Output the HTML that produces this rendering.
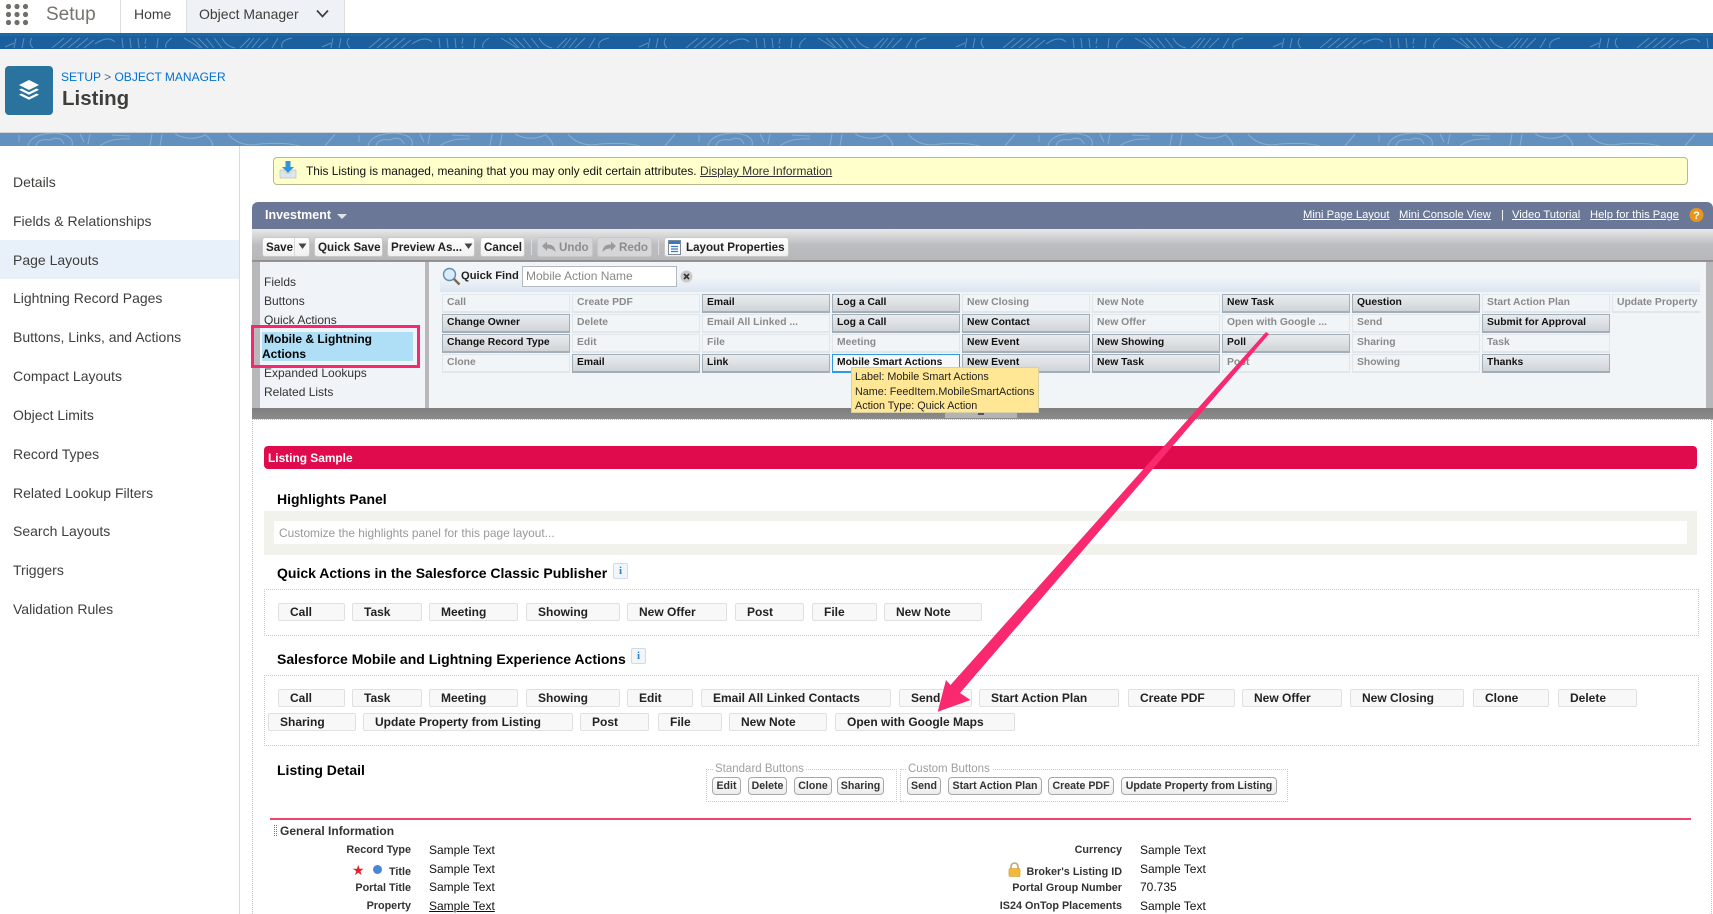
<!DOCTYPE html>
<html><head><meta charset="utf-8"><title>Listing</title>
<style>
*{box-sizing:border-box}
html,body{margin:0;padding:0;width:1713px;height:914px;overflow:hidden;background:#fff;font-family:"Liberation Sans",Arial,sans-serif}
.p{position:absolute;white-space:nowrap}
.s{position:absolute;left:13px;font-size:14px;color:#3e3e3c;height:20px;line-height:20px}
.t{position:absolute;top:237px;height:20px;line-height:19px;background:linear-gradient(#fff,#f0f0f0);border:1px solid #c8c8c8;border-radius:3px;font-size:11.6px;font-weight:bold;color:#222;padding-left:3px;white-space:nowrap}
.l{position:absolute;left:264px;font-size:12px;color:#333;line-height:16px;height:16px}
.c{position:absolute;width:128px;height:19px;line-height:15px;font-size:10.35px;font-weight:bold;padding-left:4px;white-space:nowrap;overflow:hidden}
.a{background:linear-gradient(#e9ecef,#d0d4d8);border:1px solid #a2aeb8;border-width:1px 1px 2px 1px;color:#111}
.i{background:#f2f5f8;border:1px solid #e1e6eb;border-width:1px 1px 2px 1px;color:#8a8a8a}
.b{position:absolute;height:18px;line-height:16px;background:#f8f8f8;border:1px solid #e0e0e0;border-radius:2px;font-size:12px;font-weight:bold;color:#222;padding-left:11px;white-space:nowrap}
.h{position:absolute;left:277px;font-size:14px;font-weight:bold;color:#000;height:18px;line-height:18px;white-space:nowrap}
.d{position:absolute;height:18px;top:777px;line-height:16px;background:linear-gradient(#fff,#ececec);border:1px solid #a8a8a8;border-radius:4px;font-size:10.6px;font-weight:bold;color:#333;text-align:center;white-space:nowrap}
.f{position:absolute;border:1px dotted #c8c8c8}
.g{position:absolute;font-size:11.5px;color:#a0a0a0;background:#fff;padding:0 2px;line-height:13px;white-space:nowrap}
.k{position:absolute;font-size:10.8px;font-weight:bold;color:#333;text-align:right;line-height:14px;white-space:nowrap}
.v{position:absolute;font-size:12px;color:#111;line-height:14px;white-space:nowrap}
.n{position:absolute;width:15px;height:16px;border:1px solid #cfdbe8;border-radius:2px;background:#f2f6fb;color:#2b7fd4;font:bold 11px "Liberation Serif",serif;text-align:center;line-height:14px}
.m{position:absolute;top:207px;font-size:11.2px;line-height:16px;color:#fff;white-space:nowrap}
a{color:inherit}
</style></head><body>

<!-- top nav -->
<svg class="p" style="left:0;top:0" width="40" height="33"><g fill="#706e6b"><circle cx="8.5" cy="6.5" r="2.6"/><circle cx="17" cy="6.5" r="2.6"/><circle cx="25.5" cy="6.5" r="2.6"/><circle cx="8.5" cy="14.5" r="2.6"/><circle cx="17" cy="14.5" r="2.6"/><circle cx="25.5" cy="14.5" r="2.6"/><circle cx="8.5" cy="22.5" r="2.6"/><circle cx="17" cy="22.5" r="2.6"/><circle cx="25.5" cy="22.5" r="2.6"/></g></svg>
<div class="p" style="left:46px;top:3px;font-size:19px;line-height:24px;color:#77746f">Setup</div>
<div class="p" style="left:120px;top:0;width:1px;height:33px;background:#dcdcdc"></div>
<div class="p" style="left:134px;top:5px;font-size:14px;line-height:18px;color:#3e3e3c">Home</div>
<div class="p" style="left:186px;top:0;width:159px;height:33px;background:#eef1f6;border-left:1px solid #dcdcdc;border-right:1px solid #dcdcdc"></div>
<div class="p" style="left:199px;top:5px;font-size:14px;line-height:18px;color:#3e3e3c">Object Manager</div>
<svg class="p" style="left:315px;top:8px" width="15" height="12"><path d="M2 2.5 L7.5 8.5 L13 2.5" fill="none" stroke="#3e3e3c" stroke-width="1.7"/></svg>

<!-- blue band -->
<svg class="p" style="left:0;top:33px" width="1713" height="16">
<defs><pattern id="pa" width="317" height="13" patternUnits="userSpaceOnUse" y="3">
<g fill="none" stroke="#5a8fbd" stroke-width="1">
<path d="M5 11 L14 7 M16 2 L14 12 M24 2 L22 12 M32 2 Q28 7 33 12 M52 12 L64 2 M60 12 L72 2 M68 12 L80 2 M76 12 L88 2 M84 12 L94 4 M95 8 Q108 -1 115 6 M122 2 L123 12 M130 2 L131 12 M138 2 L139 12 M146 2 L145 8 M146 10 L145 12 M158 2 L157 12 M172 2 Q164 7 166 12 M184 2 Q194 8 200 12 M192 2 L202 12 M198 2 L208 12 M206 2 L214 12 M214 2 L222 12 M222 2 Q226 10 235 12 M240 12 L250 2 M246 12 L254 2 M252 12 L260 2 M258 12 L268 2 M272 12 L278 2 M282 12 Q280 4 292 2"/>
</g></pattern></defs>
<rect width="1713" height="16" fill="#1b5f9e"/><rect width="1713" height="3" fill="#1b6aa6"/><rect y="3" width="1713" height="13" fill="url(#pa)"/></svg>

<!-- header -->
<div class="p" style="left:0;top:49px;width:1713px;height:83px;background:#f3f3f3"></div>
<div class="p" style="left:5px;top:66px;width:48px;height:49px;background:#2a739e;border-radius:4px"></div>
<svg class="p" style="left:17px;top:78px" width="24" height="24"><path d="M12 2 L22 7 L12 12 L2 7 Z" fill="#fff"/><path d="M4.5 10.5 L12 14.2 L19.5 10.5 L22 11.8 L12 16.8 L2 11.8 Z" fill="#fff"/><path d="M4.5 15.5 L12 19.2 L19.5 15.5 L22 16.8 L12 21.8 L2 16.8 Z" fill="#fff"/></svg>
<div class="p" style="left:61px;top:69px;font-size:12px;line-height:16px;color:#0070d2">SETUP <span style="color:#54698d">&gt;</span> OBJECT MANAGER</div>
<div class="p" style="left:62px;top:85px;font-size:20.5px;font-weight:bold;line-height:28px;color:#3e3e3c">Listing</div>

<!-- lower band -->
<svg class="p" style="left:0;top:132px" width="1713" height="14">
<defs><pattern id="pb" width="340" height="14" patternUnits="userSpaceOnUse">
<g fill="none" stroke="#89add0" stroke-width="1">
<path d="M19 3 L19 10 M28 14 Q30 2 55 1 Q75 3 72 14 M36 14 Q38 6 50 8 Q60 3 64 12 M80 2 L84 10 M90 2 L88 12 M100 14 Q110 6 130 7 M112 3 L130 4 M150 14 L152 2 M160 14 L162 2 M175 2 Q190 10 205 3 M205 2 Q215 12 212 14 M228 2 Q240 16 260 12 Q285 10 300 14 M325 14 L335 2"/>
</g></pattern></defs>
<rect width="1713" height="14" fill="#6391bf"/><rect width="1713" height="1" fill="#d0d4d8"/><rect y="1" width="1713" height="13" fill="url(#pb)"/></svg>

<!-- sidebar -->
<div class="p" style="left:239px;top:146px;width:1px;height:768px;background:#dddbda"></div>
<div class="p" style="left:0;top:240px;width:239px;height:39px;background:#e8f0f9"></div>
<div class="s" style="top:172px">Details</div>
<div class="s" style="top:211px">Fields &amp; Relationships</div>
<div class="s" style="top:250px">Page Layouts</div>
<div class="s" style="top:288px">Lightning Record Pages</div>
<div class="s" style="top:327px">Buttons, Links, and Actions</div>
<div class="s" style="top:366px">Compact Layouts</div>
<div class="s" style="top:405px">Object Limits</div>
<div class="s" style="top:444px">Record Types</div>
<div class="s" style="top:483px">Related Lookup Filters</div>
<div class="s" style="top:521px">Search Layouts</div>
<div class="s" style="top:560px">Triggers</div>
<div class="s" style="top:599px">Validation Rules</div>

<!-- yellow message -->
<div class="p" style="left:273px;top:157px;width:1415px;height:28px;background:#ffffcc;border:1px solid #b9b98c;border-radius:4px"></div>
<svg class="p" style="left:279px;top:160px" width="18" height="19"><path d="M1 10 H5 L7 13 H11 L13 10 H17 V18 H1 Z" fill="#dfe5ea" stroke="#b9c2ca" stroke-width=".7"/><path d="M6.5 1 H11.5 V7 H15 L9 13 L3 7 H6.5 Z" fill="#2f96dc"/></svg>
<div class="p" style="left:306px;top:163px;font-size:11.9px;line-height:16px;color:#111">This Listing is managed, meaning that you may only edit certain attributes.</div>
<div class="p" style="left:700px;top:163px;font-size:11.9px;line-height:16px;color:#333"><a href="#">Display More Information</a></div>

<!-- editor panel -->
<div class="p" style="left:252px;top:202px;width:1461px;height:27px;background:#6a7796;border-radius:6px 6px 0 0"></div>
<div class="p" style="left:265px;top:207px;font-size:12.5px;font-weight:bold;line-height:16px;color:#fff">Investment</div>
<svg class="p" style="left:336px;top:213px" width="12" height="7"><path d="M1 1 H11 L6 6 Z" fill="#dfe3ec"/></svg>
<div class="m" style="left:1303px"><a href="#">Mini Page Layout</a></div>
<div class="m" style="left:1399px"><a href="#">Mini Console View</a></div>
<div class="m" style="left:1501px">|</div>
<div class="m" style="left:1512px"><a href="#">Video Tutorial</a></div>
<div class="m" style="left:1590px"><a href="#">Help for this Page</a></div>
<svg class="p" style="left:1689px;top:207px" width="15" height="16"><circle cx="7.5" cy="8" r="7" fill="#e8951c"/><text x="7.5" y="12" font-size="11" font-weight="bold" fill="#fff" text-anchor="middle" font-family="Liberation Sans">?</text></svg>

<!-- toolbar & palette -->
<div class="p" style="left:252px;top:229px;width:1461px;height:190px;background:linear-gradient(#e8e8e8 0,#bcbdc0 16px,#b8b8ba 31px,#8a8a8a 31px,#999 33px,#b8b8ba 33px,#b8b8ba 179px,#7e7e7e 179px,#8a8a8a 189px)"></div>
<div class="t" style="left:262px;width:48px">Save</div>
<div class="p" style="left:294px;top:238px;width:1px;height:18px;background:#d8d8d8"></div>
<svg class="p" style="left:298px;top:243px" width="9" height="7"><path d="M0.5 0.5 H8.5 L4.5 6 Z" fill="#444"/></svg>
<div class="t" style="left:314px;width:69px">Quick Save</div>
<div class="t" style="left:387px;width:88px">Preview As...</div>
<svg class="p" style="left:464px;top:243px" width="9" height="7"><path d="M0.5 0.5 H8.5 L4.5 6 Z" fill="#444"/></svg>
<div class="t" style="left:480px;width:45px">Cancel</div>
<div class="p" style="left:531px;top:239px;width:1px;height:16px;background:#ddd"></div>
<div class="t" style="left:537px;width:56px;color:#8c8c8c;padding-left:21px;background:#d6d6d8">Undo</div>
<svg class="p" style="left:541px;top:240px" width="16" height="14"><path d="M1 6 L6 1.5 V4.5 Q14 4 14.5 12 Q11 8 6 8.5 V11 Z" fill="#9a9a9a"/></svg>
<div class="t" style="left:597px;width:55px;color:#8c8c8c;padding-left:21px;background:#d6d6d8">Redo</div>
<svg class="p" style="left:601px;top:240px" width="16" height="14"><path d="M15 6 L10 1.5 V4.5 Q2 4 1.5 12 Q5 8 10 8.5 V11 Z" fill="#9a9a9a"/></svg>
<div class="p" style="left:658px;top:239px;width:1px;height:16px;background:#ddd"></div>
<div class="t" style="left:664px;width:125px;padding-left:21px">Layout Properties</div>
<svg class="p" style="left:668px;top:240px" width="13" height="15"><rect x=".5" y=".5" width="12" height="14" fill="#fff" stroke="#7a8a9a"/><rect x="1" y="1" width="11" height="3" fill="#3b78c2"/><path d="M3 6.5 H10 M3 9 H10 M3 11.5 H10" stroke="#3b78c2" stroke-width="1.2"/></svg>

<div class="p" style="left:260px;top:262px;width:165px;height:146px;background:#f0f3f7"></div>
<div class="p" style="left:429px;top:262px;width:1277px;height:146px;background:#f2f5f8"></div>
<div class="l" style="top:274px">Fields</div>
<div class="l" style="top:293px">Buttons</div>
<div class="l" style="top:312px">Quick Actions</div>
<div class="p" style="left:262px;top:332px;width:151px;height:29px;background:#aedff7"></div>
<div class="p" style="left:264px;top:332px;font-size:12px;font-weight:bold;line-height:15px;color:#000">Mobile &amp; Lightning</div>
<div class="p" style="left:262px;top:347px;font-size:12px;font-weight:bold;line-height:15px;color:#000">Actions</div>
<div class="l" style="top:365px">Expanded Lookups</div>
<div class="l" style="top:384px">Related Lists</div>

<div class="p" style="left:440px;top:262px;width:1260px;height:30px;background:linear-gradient(#f2f5f8 50%,#dbe5f1)"></div>
<svg class="p" style="left:442px;top:267px" width="19" height="19"><circle cx="7.5" cy="7.5" r="6" fill="#d8ecfa" stroke="#5e8db5" stroke-width="1.4"/><path d="M12 12 L17.5 17.5" stroke="#7a6a52" stroke-width="2.4"/></svg>
<div class="p" style="left:461px;top:268px;font-size:11.2px;font-weight:bold;line-height:16px;color:#222">Quick Find</div>
<div class="p" style="left:522px;top:266px;width:155px;height:21px;background:#fff;border:1px solid #b4b9bf;font-size:12px;line-height:19px;color:#888;padding-left:3px">Mobile Action Name</div>
<svg class="p" style="left:680px;top:270px" width="13" height="13"><circle cx="6.5" cy="6.5" r="6" fill="#c9c9c9"/><path d="M4 4 L9 9 M9 4 L4 9" stroke="#333" stroke-width="1.6"/></svg>

<!-- palette grid -->
<div class="c i" style="left:442px;top:294px">Call</div>
<div class="c a" style="left:442px;top:314px">Change Owner</div>
<div class="c a" style="left:442px;top:334px">Change Record Type</div>
<div class="c i" style="left:442px;top:354px">Clone</div>
<div class="c i" style="left:572px;top:294px">Create PDF</div>
<div class="c i" style="left:572px;top:314px">Delete</div>
<div class="c i" style="left:572px;top:334px">Edit</div>
<div class="c a" style="left:572px;top:354px">Email</div>
<div class="c a" style="left:702px;top:294px">Email</div>
<div class="c i" style="left:702px;top:314px">Email All Linked ...</div>
<div class="c i" style="left:702px;top:334px">File</div>
<div class="c a" style="left:702px;top:354px">Link</div>
<div class="c a" style="left:832px;top:294px">Log a Call</div>
<div class="c a" style="left:832px;top:314px">Log a Call</div>
<div class="c i" style="left:832px;top:334px">Meeting</div>
<div class="c a" style="left:832px;top:354px;border-color:#2f9ae0;background:#f6f8fa">Mobile Smart Actions</div>
<div class="c i" style="left:962px;top:294px">New Closing</div>
<div class="c a" style="left:962px;top:314px">New Contact</div>
<div class="c a" style="left:962px;top:334px">New Event</div>
<div class="c a" style="left:962px;top:354px">New Event</div>
<div class="c i" style="left:1092px;top:294px">New Note</div>
<div class="c i" style="left:1092px;top:314px">New Offer</div>
<div class="c a" style="left:1092px;top:334px">New Showing</div>
<div class="c a" style="left:1092px;top:354px">New Task</div>
<div class="c a" style="left:1222px;top:294px">New Task</div>
<div class="c i" style="left:1222px;top:314px">Open with Google ...</div>
<div class="c a" style="left:1222px;top:334px">Poll</div>
<div class="c i" style="left:1222px;top:354px">Post</div>
<div class="c a" style="left:1352px;top:294px">Question</div>
<div class="c i" style="left:1352px;top:314px">Send</div>
<div class="c i" style="left:1352px;top:334px">Sharing</div>
<div class="c i" style="left:1352px;top:354px">Showing</div>
<div class="c i" style="left:1482px;top:294px">Start Action Plan</div>
<div class="c a" style="left:1482px;top:314px">Submit for Approval</div>
<div class="c i" style="left:1482px;top:334px">Task</div>
<div class="c a" style="left:1482px;top:354px">Thanks</div>
<div class="c i" style="left:1612px;top:294px;width:88px;border-right:0">Update Property</div>

<!-- tooltip -->
<div class="p" style="left:945px;top:412px;width:72px;height:6px;background:#b4b4b4"></div>
<div class="p" style="left:978px;top:413px;width:6px;height:2px;background:#555"></div>
<div class="p" style="left:851px;top:367px;width:188px;height:46px;background:#ffe795;border:1px solid #d8cfa4;font-size:10.8px;line-height:14.5px;color:#222;padding:2px 0 0 3px">Label: Mobile Smart Actions<br>Name: FeedItem.MobileSmartActions<br>Action Type: Quick Action</div>

<!-- canvas dotted frame -->
<div class="p" style="left:252px;top:419px;width:1461px;height:0;border-top:1px dotted #bbb"></div>
<div class="p" style="left:252px;top:419px;width:0;height:495px;border-left:1px dotted #bbb"></div>
<div class="p" style="left:1711px;top:419px;width:0;height:495px;border-left:1px dotted #bbb"></div>

<div class="p" style="left:264px;top:446px;width:1433px;height:23px;background:#e00b4d;border-radius:4px;color:#fff;font-size:11.9px;font-weight:bold;line-height:25px;padding-left:4px">Listing Sample</div>

<div class="h" style="top:490px">Highlights Panel</div>
<div class="p" style="left:264px;top:511px;width:1433px;height:44px;background:#f2f2ec"></div>
<div class="p" style="left:274px;top:521px;width:1413px;height:23px;background:#fff;font-size:11.9px;line-height:25px;color:#999;padding-left:5px">Customize the highlights panel for this page layout...</div>

<div class="h" style="top:564px">Quick Actions in the Salesforce Classic Publisher</div>
<div class="n" style="left:613px;top:563px">i</div>
<div class="f" style="left:264px;top:589px;width:1435px;height:47px"></div>
<div class="b" style="top:603px;left:278px;width:67px">Call</div>
<div class="b" style="top:603px;left:352px;width:70px">Task</div>
<div class="b" style="top:603px;left:429px;width:89px">Meeting</div>
<div class="b" style="top:603px;left:526px;width:94px">Showing</div>
<div class="b" style="top:603px;left:627px;width:100px">New Offer</div>
<div class="b" style="top:603px;left:735px;width:69px">Post</div>
<div class="b" style="top:603px;left:812px;width:65px">File</div>
<div class="b" style="top:603px;left:884px;width:98px">New Note</div>

<div class="h" style="top:650px">Salesforce Mobile and Lightning Experience Actions</div>
<div class="n" style="left:631px;top:648px">i</div>
<div class="f" style="left:264px;top:675px;width:1435px;height:71px"></div>
<div class="b" style="top:689px;left:278px;width:67px">Call</div>
<div class="b" style="top:689px;left:352px;width:70px">Task</div>
<div class="b" style="top:689px;left:429px;width:89px">Meeting</div>
<div class="b" style="top:689px;left:526px;width:94px">Showing</div>
<div class="b" style="top:689px;left:627px;width:66px">Edit</div>
<div class="b" style="top:689px;left:701px;width:190px">Email All Linked Contacts</div>
<div class="b" style="top:689px;left:899px;width:73px">Send</div>
<div class="b" style="top:689px;left:979px;width:140px">Start Action Plan</div>
<div class="b" style="top:689px;left:1128px;width:107px">Create PDF</div>
<div class="b" style="top:689px;left:1242px;width:100px">New Offer</div>
<div class="b" style="top:689px;left:1350px;width:114px">New Closing</div>
<div class="b" style="top:689px;left:1473px;width:76px">Clone</div>
<div class="b" style="top:689px;left:1558px;width:79px">Delete</div>
<div class="b" style="top:713px;left:268px;width:88px">Sharing</div>
<div class="b" style="top:713px;left:363px;width:210px">Update Property from Listing</div>
<div class="b" style="top:713px;left:580px;width:69px">Post</div>
<div class="b" style="top:713px;left:658px;width:64px">File</div>
<div class="b" style="top:713px;left:729px;width:98px">New Note</div>
<div class="b" style="top:713px;left:835px;width:180px">Open with Google Maps</div>

<div class="h" style="top:761px">Listing Detail</div>
<div class="f" style="left:706px;top:769px;width:191px;height:33px"></div>
<div class="g" style="left:713px;top:763px">Standard Buttons</div>
<div class="f" style="left:900px;top:769px;width:388px;height:33px"></div>
<div class="g" style="left:906px;top:763px">Custom Buttons</div>
<div class="d" style="left:712px;width:29px">Edit</div>
<div class="d" style="left:748px;width:39px">Delete</div>
<div class="d" style="left:794px;width:38px">Clone</div>
<div class="d" style="left:837px;width:47px">Sharing</div>
<div class="d" style="left:907px;width:34px">Send</div>
<div class="d" style="left:948px;width:94px">Start Action Plan</div>
<div class="d" style="left:1048px;width:66px">Create PDF</div>
<div class="d" style="left:1121px;width:156px">Update Property from Listing</div>

<div class="p" style="left:270px;top:818px;width:1421px;height:2px;background:#f04468"></div>
<div class="p" style="left:274px;top:825px;width:3px;height:11px;border-left:1px dotted #777;border-right:1px dotted #777"></div>
<div class="p" style="left:280px;top:823px;font-size:12px;font-weight:bold;line-height:16px;color:#333">General Information</div>

<div class="k" style="right:1302px;top:843px">Record Type</div>
<div class="v" style="left:429px;top:843px">Sample Text</div>
<div class="p" style="left:352px;top:862px;font-size:14px;line-height:16px;color:#e8202a">★</div>
<div class="p" style="left:373px;top:865px;width:9px;height:9px;border-radius:50%;background:#4a86d8"></div>
<div class="k" style="right:1302px;top:865px">Title</div>
<div class="v" style="left:429px;top:862px">Sample Text</div>
<div class="k" style="right:1302px;top:881px">Portal Title</div>
<div class="v" style="left:429px;top:880px">Sample Text</div>
<div class="k" style="right:1302px;top:899px">Property</div>
<div class="v" style="left:429px;top:899px;text-decoration:underline">Sample Text</div>

<div class="k" style="right:591px;top:843px">Currency</div>
<div class="v" style="left:1140px;top:843px">Sample Text</div>
<svg class="p" style="left:1008px;top:862px" width="13" height="15"><path d="M3 7 V4.5 A3.5 3.5 0 0 1 10 4.5 V7" fill="none" stroke="#b8a878" stroke-width="1.6"/><rect x="1" y="6.5" width="11" height="8" rx="1" fill="#f2b83a" stroke="#cf9420" stroke-width=".6"/></svg>
<div class="k" style="right:591px;top:865px">Broker's Listing ID</div>
<div class="v" style="left:1140px;top:862px">Sample Text</div>
<div class="k" style="right:591px;top:881px">Portal Group Number</div>
<div class="v" style="left:1140px;top:880px">70.735</div>
<div class="k" style="right:591px;top:899px">IS24 OnTop Placements</div>
<div class="v" style="left:1140px;top:899px">Sample Text</div>

<!-- annotations -->
<div class="p" style="left:251px;top:325px;width:169px;height:43px;border:3.5px solid #f7286f"></div>
<svg class="p" style="left:0;top:0;pointer-events:none" width="1713" height="914"><path d="M1266 332 L1269 334 L960 693 L970.5 700 L937.7 711.7 L946 680 L950.5 685 Z" fill="#f9286f"/></svg>
</body></html>
